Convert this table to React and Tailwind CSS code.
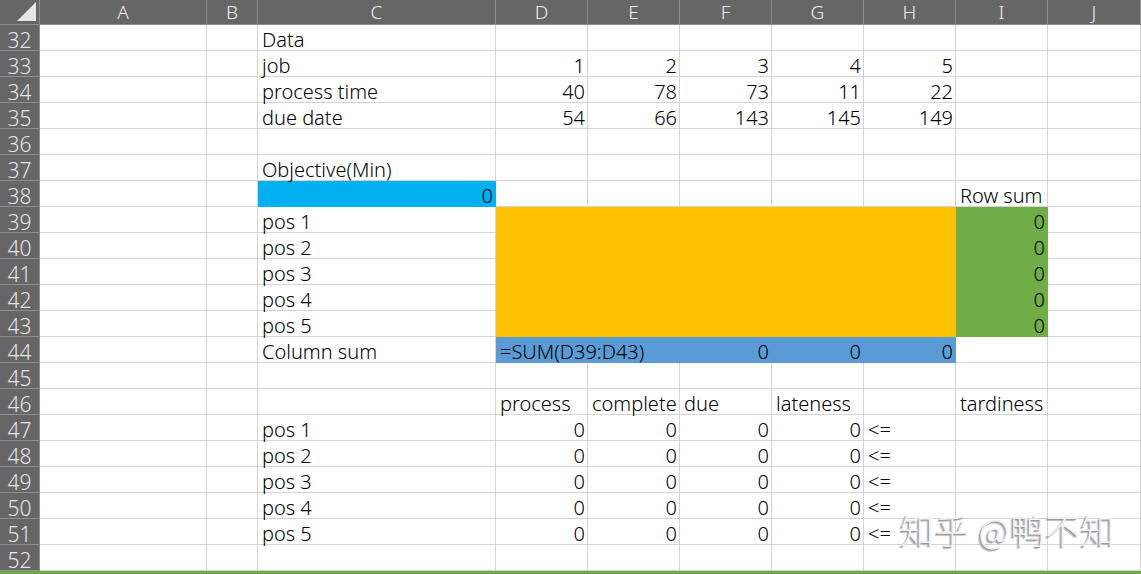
import React from "react";

const COLS = ["A", "B", "C", "D", "E", "F", "G", "H", "I", "J"];

const BLUE = "#00b0f0";
const ORANGE = "#ffc000";
const GREEN = "#70ad47";
const STEEL = "#5b9bd5";

// cell contents keyed by row -> col
const data = {
  32: { C: "Data" },
  33: { C: "job", D: 1, E: 2, F: 3, G: 4, H: 5 },
  34: { C: "process time", D: 40, E: 78, F: 73, G: 11, H: 22 },
  35: { C: "due date", D: 54, E: 66, F: 143, G: 145, H: 149 },
  37: { C: "Objective(Min)" },
  38: { C: 0, I: "Row sum" },
  39: { C: "pos 1", I: 0 },
  40: { C: "pos 2", I: 0 },
  41: { C: "pos 3", I: 0 },
  42: { C: "pos 4", I: 0 },
  43: { C: "pos 5", I: 0 },
  44: { C: "Column sum", D: "=SUM(D39:D43)", F: 0, G: 0, H: 0 },
  46: { D: "process", E: "complete", F: "due", G: "lateness", I: "tardiness" },
};
for (let r = 47; r <= 51; r++) {
  data[r] = { C: `pos ${r - 46}`, D: 0, E: 0, F: 0, G: 0, H: "<=" };
}

const fillOf = (row, col) => {
  if (row === 38 && col === "C") return BLUE;
  if (row >= 39 && row <= 43 && "DEFGH".includes(col)) return ORANGE;
  if (row >= 39 && row <= 43 && col === "I") return GREEN;
  if (row === 44 && "DEFGH".includes(col)) return STEEL;
  return null;
};

const Cell = ({ row, col }) => {
  const v = data[row]?.[col];
  const fill = fillOf(row, col);
  const isNum = typeof v === "number";
  return (
    <div
      className={`flex items-end border-r border-b whitespace-nowrap ${
        isNum ? "justify-end pr-[2px]" : "justify-start pl-[4px]"
      } ${fill ? "" : "border-[#d4d4d4]"}`}
      style={fill ? { backgroundColor: fill, borderColor: fill } : undefined}
    >
      {/* relative so overflowing text (the formula) paints over the next cell's fill */}
      {v !== undefined && <span className="relative leading-[21px]">{v}</span>}
    </div>
  );
};

export default function App() {
  const rows = [];
  for (let r = 32; r <= 52; r++) rows.push(r);

  return (
    <div
      className="relative w-[1141px] h-[574px] overflow-hidden bg-white text-[20px] text-black"
      style={{ fontFamily: '"Noto Sans", "Noto Sans CJK SC", sans-serif', fontWeight: 300 }}
    >
      <div className="grid grid-cols-[40px_167px_51px_238px_92px_92px_92px_92px_92px_92px_93px] grid-rows-[25px_repeat(21,26px)]">
        {/* corner */}
        <div className="relative bg-[#666666] border-r border-b border-[#8e8e8e]">
          <div className="absolute right-[3px] bottom-[3px] w-0 h-0 border-l-[19px] border-l-transparent border-b-[19px] border-b-[#e6e6e6]" />
        </div>
        {COLS.map((c) => (
          <div
            key={c}
            className="flex items-center justify-center bg-[#666666] border-r border-b border-[#8e8e8e] text-[#eeeeee] text-[19px] leading-none"
          >
            {c}
          </div>
        ))}

        {rows.map((r) => (
          <React.Fragment key={r}>
            <div className="flex items-center justify-center pt-[5px] bg-[#666666] border-r border-b border-[#8e8e8e] text-[#e4e4e4] text-[21px] leading-none">
              {r}
            </div>
            {COLS.map((c) => (
              <Cell key={c} row={r} col={c} />
            ))}
          </React.Fragment>
        ))}
      </div>
      <div className="h-[3px] bg-[#6fa84a]" />

      {/* watermark */}
      <div
        className="absolute left-[900px] top-[504px] text-[34px] text-[#f2f2f2] tracking-[1px] whitespace-nowrap"
        style={{
          fontFamily: '"Noto Sans CJK SC", sans-serif',
          textShadow: "-1px 1px 0 #9a9a9a, -2px 2px 1px #b5b5b5",
        }}
      >
        知乎 @鸭不知
      </div>
    </div>
  );
}
